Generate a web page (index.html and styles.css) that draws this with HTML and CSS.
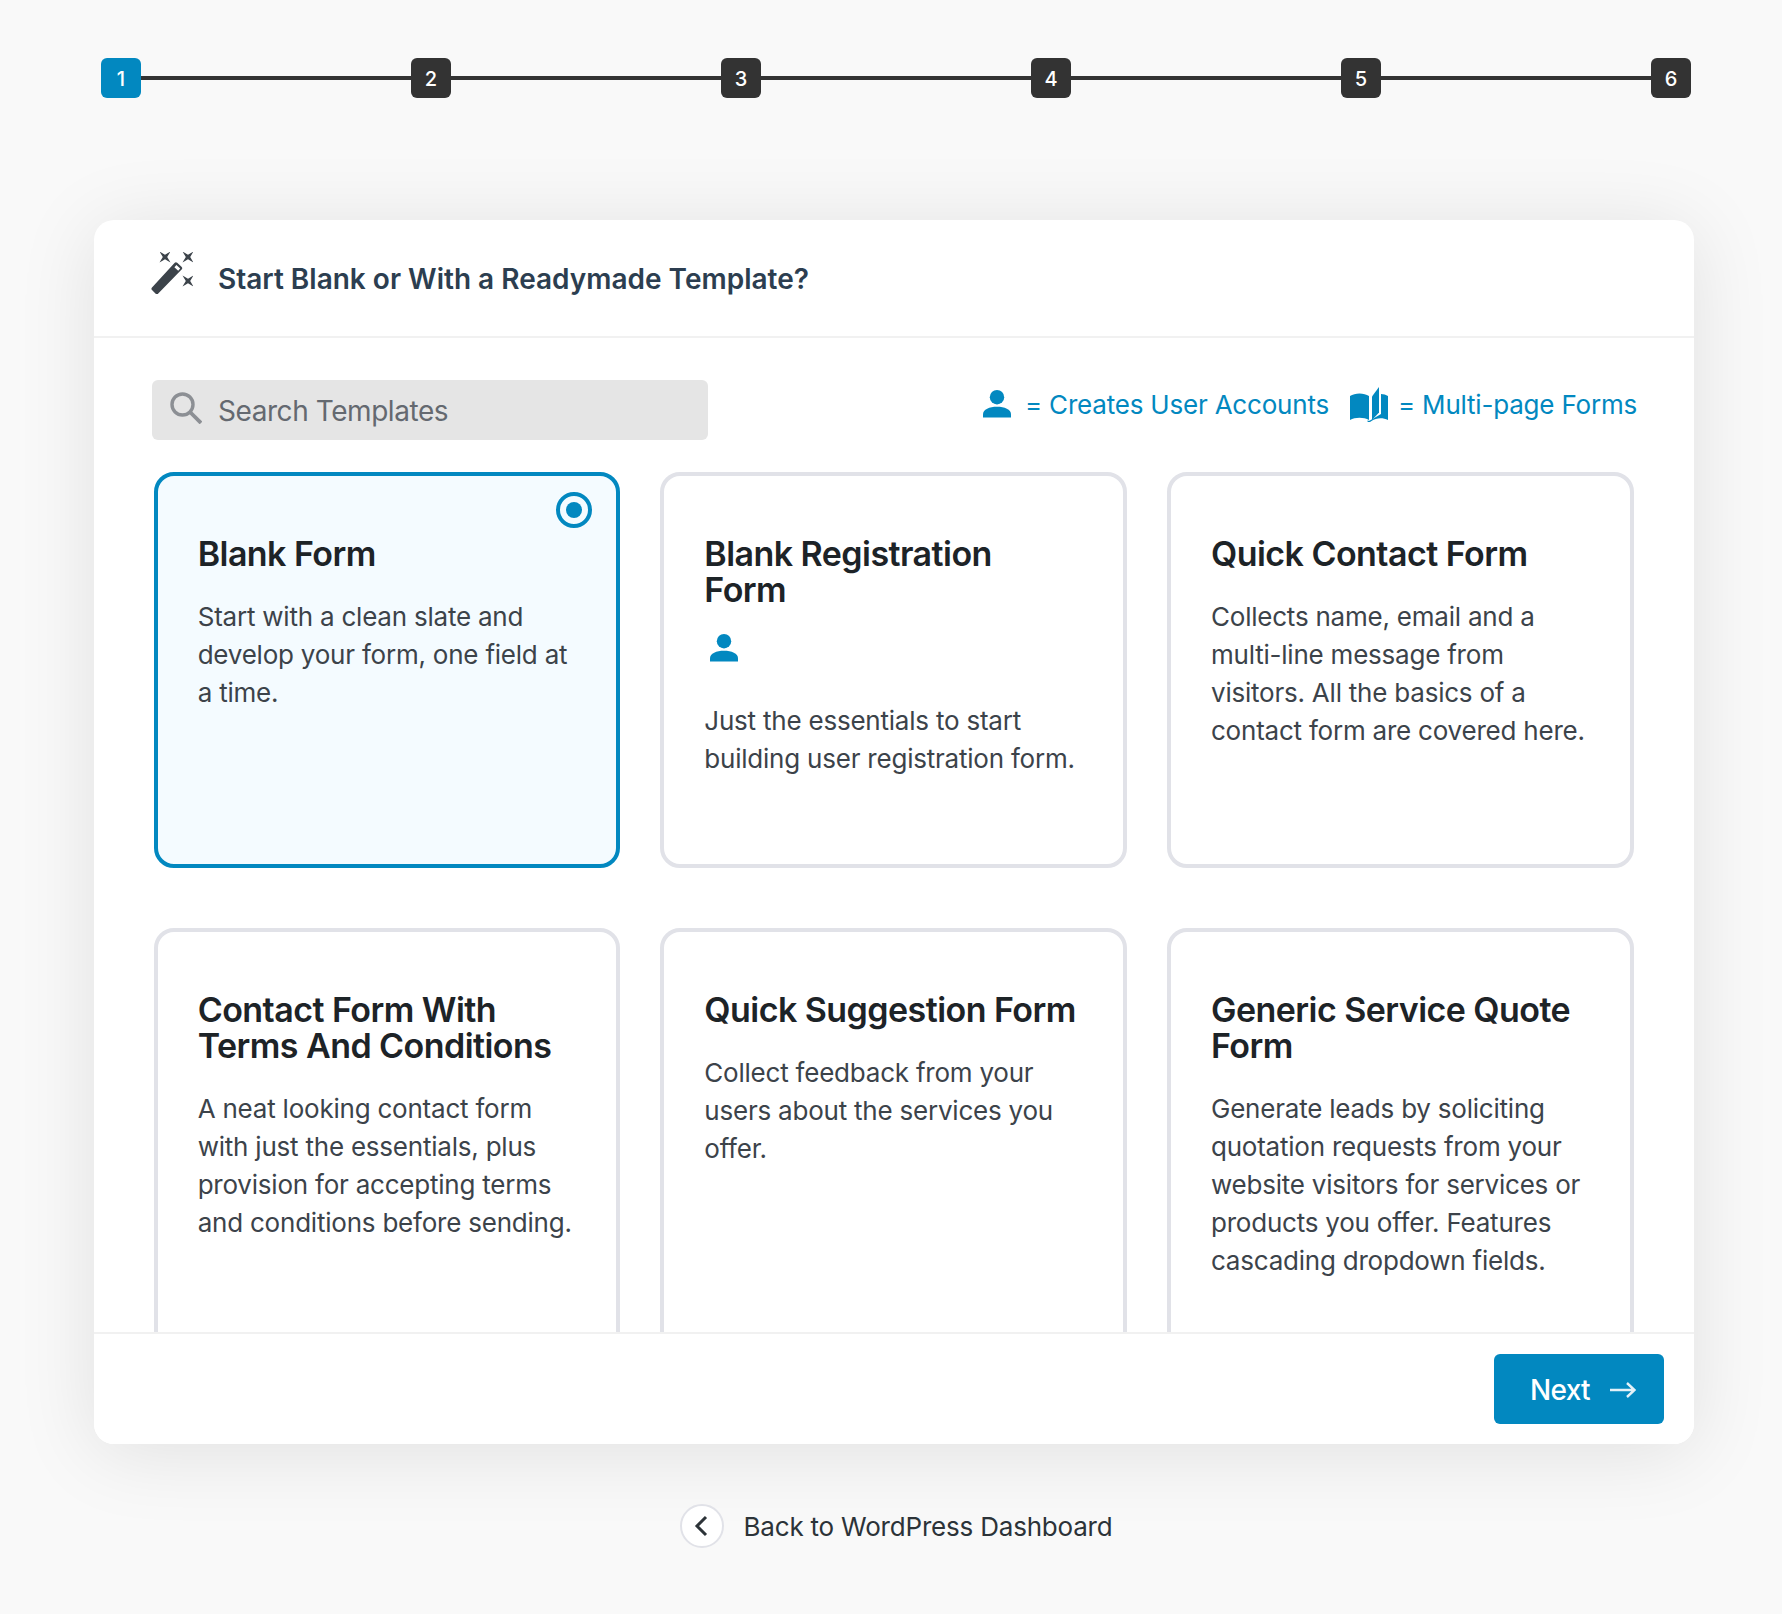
FILE: index.html
```html
<!DOCTYPE html>
<html lang="en">
<head>
<meta charset="utf-8">
<title>Form Wizard</title>
<link rel="stylesheet" href="styles.css">
</head>
<body>
<svg class="defs" width="0" height="0" aria-hidden="true">
  <symbol id="person" viewBox="0 0 28 28">
    <circle cx="14" cy="7.2" r="7.2"/>
    <path d="M0 27.5v-3.2C0 19.4 6.5 16.8 14 16.8s14 2.600 14 7.500v3.200z"/>
  </symbol>
  <symbol id="spark" viewBox="-6 -6 12 12">
    <path d="M-5.500-5.500 0-2.200 5.500-5.500 2.200 0 5.500 5.500 0 2.200-5.500 5.500-2.200 0z"/>
  </symbol>
</svg>
<nav class="steps">
  <span class="step step-active">1</span><span class="step-line"></span>
  <span class="step">2</span><span class="step-line"></span>
  <span class="step">3</span><span class="step-line"></span>
  <span class="step">4</span><span class="step-line"></span>
  <span class="step">5</span><span class="step-line"></span>
  <span class="step">6</span>
</nav>
<main class="panel">
  <header class="panel-head">
    <svg class="wand" width="42" height="42" viewBox="0 0 42 42" fill="#3c434a">
      <path fill-rule="evenodd" d="M1 35.500 23.500 11a2 2 0 0 1 2.700-.200l4.300 4a2 2 0 0 1 .100 2.800L7 41.800a1.600 1.600 0 0 1-2.300 0L1 38a1.800 1.800 0 0 1 0-2.500zM23.400 15.200l3.800 3.600 2-2.200-3.800-3.500z"/>
      <use href="#spark" x="8" y="-1" width="12" height="12"/>
      <use href="#spark" x="31" y="-1" width="12" height="12"/>
      <use href="#spark" x="31" y="23" width="12" height="12"/>
    </svg>
    <h1 class="panel-title">Start Blank or With a Readymade Template?</h1>
  </header>
  <div class="panel-body">
    <div class="toolbar">
      <label class="search">
        <svg class="search-icon" width="32" height="32" viewBox="0 0 32 32" fill="none" stroke="#8c8f94" stroke-width="3.400">
          <circle cx="12.500" cy="12.500" r="10.500"/>
          <path d="M20 20l11 11" stroke-width="3.800"/>
        </svg>
        <span class="search-text">Search Templates</span>
      </label>
      <div class="legend">
        <svg class="legend-person" width="28" height="28"><use href="#person"/></svg>
        <span class="legend-label">= Creates User Accounts</span>
        <svg class="legend-book" width="38" height="35" viewBox="0 0 38 35">
          <path d="M0 9C5 5.500 14 5.500 19 9v24C14 30 5 30 0 33z"/>
          <path d="M22 9.500 29 0v25.500L22 33z"/>
          <path d="M31 7c2.500 0 5 .800 7 2v24c-5-2.500-11.500-2.500-16.500 1l-1.500 1h-2l-1-1.300h2.500L31 27z"/>
        </svg>
        <span class="legend-label">= Multi-page Forms</span>
      </div>
    </div>
    <div class="cards">
      <article class="card card-selected">
        <span class="radio"></span>
        <h2 class="card-title">Blank Form</h2>
        <p class="card-text">Start with a clean slate and develop your form, one field at a time.</p>
      </article>
      <article class="card">
        <h2 class="card-title">Blank Registration Form</h2>
        <svg class="card-person" width="28" height="28"><use href="#person"/></svg>
        <p class="card-text card-text-icon">Just the essentials to start building user registration form.</p>
      </article>
      <article class="card">
        <h2 class="card-title">Quick Contact Form</h2>
        <p class="card-text">Collects name, email and a multi-line message from visitors. All the basics of a contact form are covered here.</p>
      </article>
      <article class="card">
        <h2 class="card-title">Contact Form With Terms And Conditions</h2>
        <p class="card-text">A neat looking contact form with just the essentials, plus provision for accepting terms and conditions before sending.</p>
      </article>
      <article class="card">
        <h2 class="card-title">Quick Suggestion Form</h2>
        <p class="card-text">Collect feedback from your users about the services you offer.</p>
      </article>
      <article class="card">
        <h2 class="card-title">Generic Service Quote Form</h2>
        <p class="card-text">Generate leads by soliciting quotation requests from your website visitors for services or products you offer. Features cascading dropdown fields.</p>
      </article>
    </div>
  </div>
  <footer class="panel-foot">
    <button class="next" type="button">Next
      <svg width="26" height="16" viewBox="0 0 26 16" fill="none" stroke="#e3f1f8" stroke-width="2.400">
        <path d="M0 8h24.500M17 1l7.500 7-7.500 7"/>
      </svg>
    </button>
  </footer>
</main>
<a class="back">
  <span class="back-circle">
    <svg width="14" height="22" viewBox="0 0 14 22" fill="none" stroke="#2c3338" stroke-width="3">
      <path d="M12 2 3 11l9 9"/>
    </svg>
  </span>
  <span class="back-text">Back to WordPress Dashboard</span>
</a>
</body>
</html>
```
FILE: styles.css
```css
* { box-sizing: border-box; }
html, body { margin: 0; padding: 0; }
body {
  background: #f9f9f9;
  font-family: Inter, "Liberation Sans", sans-serif;
  width: 1782px;
  height: 1614px;
  overflow: hidden;
  color: #3c434a;
}
.defs { position: absolute; }
.steps {
  display: flex;
  align-items: center;
  margin: 58px 91px 0 101px;
}
.step {
  flex: none;
  width: 40px;
  height: 40px;
  border-radius: 6px;
  background: #333333;
  color: #fff;
  font-size: 20px;
  font-weight: 500;
  display: flex;
  align-items: center;
  justify-content: center;
  padding-top: 1px;
}
.step-active { background: #0288c0; }
.step-line { flex: 1; height: 4px; background: #333333; }
.panel {
  margin: 122px 88px 0 94px;
  height: 1224px;
  background: #fff;
  border-radius: 20px;
  box-shadow: 0 8px 80px rgba(0, 0, 0, 0.1);
  display: flex;
  flex-direction: column;
  overflow: hidden;
}
.panel-head {
  flex: none;
  height: 118px;
  padding: 32px 58px 0 57px;
  display: flex;
  align-items: flex-start;
  gap: 25px;
  border-bottom: 2px solid #f1f1f1;
}
.wand { flex: none; }
.panel-title {
  margin: 0;
  padding-top: 8px;
  font-size: 28px;
  line-height: 38px;
  font-weight: 600;
  color: #2c3e50;
}
.panel-body {
  flex: 1;
  min-height: 0;
  overflow: hidden;
  padding: 42px 60px 0;
}
.toolbar {
  display: flex;
  justify-content: space-between;
  align-items: flex-start;
  margin-left: -2px;
  margin-right: -3px;
}
.search {
  width: 556px;
  height: 60px;
  border-radius: 6px;
  background: #e5e5e5;
  display: flex;
  align-items: center;
  padding: 0 0 0 18px;
  gap: 16px;
}
.search-icon { margin-top: -4px; }
.search-text { font-size: 28px; color: #646970; margin-top: 2px; letter-spacing: -0.44px; }
.legend {
  display: flex;
  align-items: center;
  color: #0288c0;
  font-size: 26px;
  margin-top: 7px;
  height: 34px;
  letter-spacing: -0.2px;
}
.legend svg { fill: #0288c0; flex: none; }
.legend-person { margin-right: 14px; }
.legend-label { margin-right: 21px; }
.legend-label:last-child { margin-right: 0; }
.legend-book { margin-right: 10px; }
.cards {
  display: grid;
  grid-template-columns: repeat(3, 466.67px);
  grid-template-rows: 396px 460px;
  column-gap: 40px;
  row-gap: 60px;
  margin-top: 32px;
  margin-left: -0.33px;
}
.card {
  position: relative;
  border: 4px solid #e1e2e8;
  border-radius: 20px;
  padding: 60px 40px 0;
  background: #fff;
}
.card-selected {
  border-color: #0288c0;
  background: #f4fbff;
}
.radio {
  position: absolute;
  top: 16px;
  right: 24px;
  width: 36px;
  height: 36px;
  border-radius: 50%;
  border: 4px solid #0288c0;
  display: flex;
  align-items: center;
  justify-content: center;
}
.radio::after {
  content: "";
  width: 16px;
  height: 16px;
  border-radius: 50%;
  background: #0288c0;
}
.card-title {
  margin: 0;
  padding-right: 5px;
  font-size: 34px;
  line-height: 36px;
  font-weight: 600;
  color: #1d2327;
  letter-spacing: -0.55px;
}
.card-person {
  display: block;
  fill: #0288c0;
  margin: 26px 0 0 6px;
}
.card-text {
  margin: 26px 0 0;
  font-size: 26px;
  line-height: 38px;
  color: #3c434a;
  letter-spacing: -0.22px;
}
.card-text-icon { margin-top: 40px; }
.panel-foot {
  flex: none;
  height: 112px;
  border-top: 2px solid #f1f1f1;
  padding: 20px 30px 0 0;
  display: flex;
  justify-content: flex-end;
  background: #fff;
}
.next {
  width: 170px;
  height: 70px;
  border: 0;
  border-radius: 6px;
  background: #0288c0;
  color: #fff;
  font-family: inherit;
  font-size: 28px;
  font-weight: 500;
  letter-spacing: -0.7px;
  display: flex;
  align-items: center;
  justify-content: center;
  gap: 20px;
  padding: 2px 0 0 8px;
}
.back {
  display: flex;
  align-items: center;
  justify-content: center;
  gap: 20px;
  margin-top: 60px;
  padding-left: 10px;
}
.back-circle {
  width: 44px;
  height: 44px;
  border-radius: 50%;
  border: 2px solid #e1e2e8;
  background: #fff;
  display: flex;
  align-items: center;
  justify-content: center;
  padding-right: 2px;
}
.back-text { font-size: 26px; color: #2c3338; letter-spacing: -0.2px; }
```
